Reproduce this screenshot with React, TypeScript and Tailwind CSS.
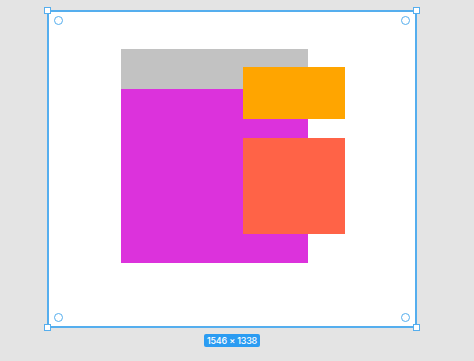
import React from "react";

const BLUE = "border-[#55aeee]";

function Handle({ pos }: { pos: string }) {
  return <div className={`absolute h-[7px] w-[7px] border ${BLUE} bg-white ${pos}`} />;
}

function Ring({ pos }: { pos: string }) {
  return <div className={`absolute h-[9px] w-[9px] rounded-full border-[1.5px] ${BLUE} bg-white ${pos}`} />;
}

export default function App() {
  return (
    <div
      className="flex h-[361px] w-full flex-col bg-[#e4e4e4] pl-[47px] pt-[10px]"
      style={{ fontFamily: "Inter, 'Liberation Sans', sans-serif" }}
    >
      <div className="flex w-[370px] flex-col items-center">
        <div className={`relative h-[318px] w-[370px] border-2 ${BLUE} bg-white`}>
          {/* artboard contents */}
          <div className="absolute left-[72px] top-[37px] h-[40px] w-[187px] bg-[#c2c2c2]" />
          <div className="absolute left-[72px] top-[77px] h-[174px] w-[187px] bg-[#dc32dc]" />
          <div className="absolute left-[194px] top-[55px] h-[52px] w-[102px] bg-[#ffa500]" />
          <div className="absolute left-[194px] top-[126px] h-[96px] w-[102px] bg-[#ff6347]" />

          {/* selection handles */}
          <Handle pos="-left-[5px] -top-[5px]" />
          <Handle pos="-right-[5px] -top-[5px]" />
          <Handle pos="-left-[5px] -bottom-[5px]" />
          <Handle pos="-right-[5px] -bottom-[5px]" />
          <Ring pos="left-[5px] top-[4px]" />
          <Ring pos="right-[5px] top-[4px]" />
          <Ring pos="left-[5px] bottom-[4px]" />
          <Ring pos="right-[5px] bottom-[4px]" />
        </div>
        <div className="mt-[6px] flex h-[13px] items-center rounded-[2px] bg-[#2b9cf2] px-[3px] text-[9px] font-medium leading-none tracking-[-0.2px] text-white">
          1546 × 1338
        </div>
      </div>
    </div>
  );
}
